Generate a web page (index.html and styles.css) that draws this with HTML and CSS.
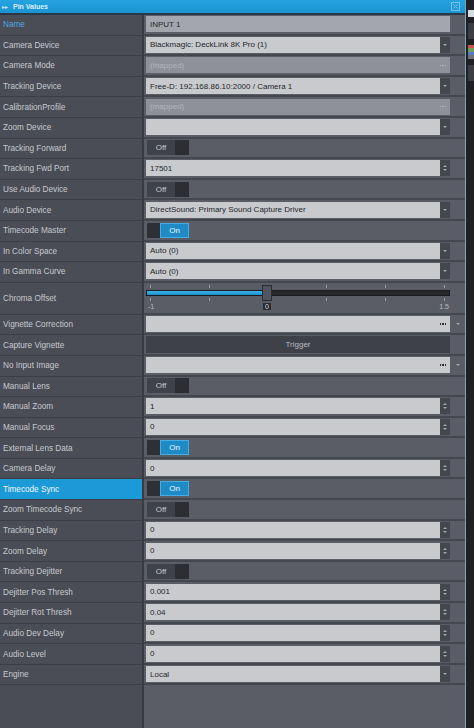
FILE: index.html
```html
<!DOCTYPE html>
<html lang="en">
<head>
    <meta charset="UTF-8">
    <title>Pin Values</title>
    <link rel="stylesheet" href="styles.css">
</head>
<body>
    <div class="screen">
        <div class="panel">
            <div class="titlebar">
                <span class="title-arrows">&#9656;&#9656;</span>
                <span class="title-text">Pin Values</span>
                <svg class="title-close" width="9" height="9" viewBox="0 0 9 9">
                    <rect x="0.5" y="0.5" width="8" height="8" fill="none" stroke="#7cc0e6" stroke-width="1"/>
                    <path d="M2.5 2.5 L6.5 6.5 M6.5 2.5 L2.5 6.5" stroke="#7cc0e6" stroke-width="1"/>
                </svg>
            </div>
            <div class="title-line"></div>

            <div class="rows">
                <div class="row">
                    <div class="label label-name">Name</div>
                    <div class="value"><div class="field field-name">INPUT 1</div></div>
                </div>
                <div class="row">
                    <div class="label">Camera Device</div>
                    <div class="value"><div class="field">Blackmagic: DeckLink 8K Pro (1)</div><div class="btn"><span class="tri-down"></span></div></div>
                </div>
                <div class="row">
                    <div class="label">Camera Mode</div>
                    <div class="value"><div class="field field-mapped">(mapped)<span class="dots"><i></i><i></i><i></i></span></div></div>
                </div>
                <div class="row">
                    <div class="label">Tracking Device</div>
                    <div class="value"><div class="field">Free-D: 192.168.86.10:2000 / Camera 1</div><div class="btn"><span class="tri-down"></span></div></div>
                </div>
                <div class="row">
                    <div class="label">CalibrationProfile</div>
                    <div class="value"><div class="field field-mapped">(mapped)<span class="dots"><i></i><i></i><i></i></span></div></div>
                </div>
                <div class="row">
                    <div class="label">Zoom Device</div>
                    <div class="value"><div class="field"></div><div class="btn"><span class="tri-down"></span></div></div>
                </div>
                <div class="row">
                    <div class="label">Tracking Forward</div>
                    <div class="value"><div class="toggle"><span class="t-text">Off</span><span class="t-knob"></span></div></div>
                </div>
                <div class="row">
                    <div class="label">Tracking Fwd Port</div>
                    <div class="value"><div class="field">17501</div><div class="btn spin"><span class="tri-up"></span><span class="tri-down"></span></div></div>
                </div>
                <div class="row">
                    <div class="label">Use Audio Device</div>
                    <div class="value"><div class="toggle"><span class="t-text">Off</span><span class="t-knob"></span></div></div>
                </div>
                <div class="row">
                    <div class="label">Audio Device</div>
                    <div class="value"><div class="field">DirectSound: Primary Sound Capture Driver</div><div class="btn"><span class="tri-down"></span></div></div>
                </div>
                <div class="row">
                    <div class="label">Timecode Master</div>
                    <div class="value"><div class="toggle on"><span class="t-knob"></span><span class="t-text">On</span></div></div>
                </div>
                <div class="row">
                    <div class="label">In Color Space</div>
                    <div class="value"><div class="field">Auto (0)</div><div class="btn"><span class="tri-down"></span></div></div>
                </div>
                <div class="row">
                    <div class="label">In Gamma Curve</div>
                    <div class="value"><div class="field">Auto (0)</div><div class="btn"><span class="tri-down"></span></div></div>
                </div>
                <div class="row row-tall">
                    <div class="label">Chroma Offset</div>
                    <div class="value">
                        <div class="slider">
                            <div class="ticks"><i></i><i></i><i></i><i></i><i></i><i></i></div>
                            <div class="track">
                                <div class="track-fill"></div>
                                <div class="handle"></div>
                            </div>
                            <div class="ticks"><i></i><i></i><i></i><i></i><i></i><i></i></div>
                            <div class="scale">
                                <span>-1</span>
                                <span class="scale-val">0</span>
                                <span>1.5</span>
                            </div>
                        </div>
                    </div>
                </div>
                <div class="row">
                    <div class="label">Vignette Correction</div>
                    <div class="value value-ext"><div class="field"><span class="dots dark"><i></i><i></i><i></i></span></div><div class="ext"><span class="tri-down"></span></div></div>
                </div>
                <div class="row">
                    <div class="label">Capture Vignette</div>
                    <div class="value"><div class="trigger">Trigger</div></div>
                </div>
                <div class="row">
                    <div class="label">No Input Image</div>
                    <div class="value value-ext"><div class="field"><span class="dots dark"><i></i><i></i><i></i></span></div><div class="ext"><span class="tri-down"></span></div></div>
                </div>
                <div class="row">
                    <div class="label">Manual Lens</div>
                    <div class="value"><div class="toggle"><span class="t-text">Off</span><span class="t-knob"></span></div></div>
                </div>
                <div class="row">
                    <div class="label">Manual Zoom</div>
                    <div class="value"><div class="field">1</div><div class="btn spin"><span class="tri-up"></span><span class="tri-down"></span></div></div>
                </div>
                <div class="row">
                    <div class="label">Manual Focus</div>
                    <div class="value"><div class="field">0</div><div class="btn spin"><span class="tri-up"></span><span class="tri-down"></span></div></div>
                </div>
                <div class="row">
                    <div class="label">External Lens Data</div>
                    <div class="value"><div class="toggle on"><span class="t-knob"></span><span class="t-text">On</span></div></div>
                </div>
                <div class="row">
                    <div class="label">Camera Delay</div>
                    <div class="value"><div class="field">0</div><div class="btn spin"><span class="tri-up"></span><span class="tri-down"></span></div></div>
                </div>
                <div class="row">
                    <div class="label label-active">Timecode Sync</div>
                    <div class="value"><div class="toggle on"><span class="t-knob"></span><span class="t-text">On</span></div></div>
                </div>
                <div class="row">
                    <div class="label">Zoom Timecode Sync</div>
                    <div class="value"><div class="toggle"><span class="t-text">Off</span><span class="t-knob"></span></div></div>
                </div>
                <div class="row">
                    <div class="label">Tracking Delay</div>
                    <div class="value"><div class="field">0</div><div class="btn spin"><span class="tri-up"></span><span class="tri-down"></span></div></div>
                </div>
                <div class="row">
                    <div class="label">Zoom Delay</div>
                    <div class="value"><div class="field">0</div><div class="btn spin"><span class="tri-up"></span><span class="tri-down"></span></div></div>
                </div>
                <div class="row">
                    <div class="label">Tracking Dejitter</div>
                    <div class="value"><div class="toggle"><span class="t-text">Off</span><span class="t-knob"></span></div></div>
                </div>
                <div class="row">
                    <div class="label">Dejitter Pos Thresh</div>
                    <div class="value"><div class="field">0.001</div><div class="btn spin"><span class="tri-up"></span><span class="tri-down"></span></div></div>
                </div>
                <div class="row">
                    <div class="label">Dejitter Rot Thresh</div>
                    <div class="value"><div class="field">0.04</div><div class="btn spin"><span class="tri-up"></span><span class="tri-down"></span></div></div>
                </div>
                <div class="row">
                    <div class="label">Audio Dev Delay</div>
                    <div class="value"><div class="field">0</div><div class="btn spin"><span class="tri-up"></span><span class="tri-down"></span></div></div>
                </div>
                <div class="row">
                    <div class="label">Audio Level</div>
                    <div class="value"><div class="field">0</div><div class="btn spin"><span class="tri-up"></span><span class="tri-down"></span></div></div>
                </div>
                <div class="row">
                    <div class="label">Engine</div>
                    <div class="value"><div class="field">Local</div><div class="btn"><span class="tri-down"></span></div></div>
                </div>
                <div class="row row-fill">
                    <div class="label"></div>
                    <div class="value"></div>
                </div>
            </div>
        </div>
        <div class="edge"></div>
        <div class="side">
            <div class="side-box light"></div>
            <div class="side-box"></div>
            <div class="side-box colors"></div>
            <div class="side-box"></div>
        </div>
    </div>
</body>
</html>
```

FILE: styles.css
```css
/* Pin Values panel */
html, body {
    margin: 0;
    padding: 0;
    background: #1f2125;
}

.screen {
    display: flex;
    width: 474px;
    height: 728px;
    overflow: hidden;
    font-family: "Liberation Sans", Arial, sans-serif;
    font-size: 8px;
}

.panel {
    width: 465px;
    flex: none;
    display: flex;
    flex-direction: column;
    background: #5a5d66;
}

.edge {
    width: 1px;
    background: #7ea4b7;
    flex: none;
}

.side {
    flex: 1;
    display: flex;
    flex-direction: column;
    gap: 6px;
    padding: 10px 0 0 2px;
    background: #1e2024;
}

.side-box {
    height: 16px;
    background: #3a3d44;
}

.side-box.light {
    height: 7px;
    background: #d8dadd;
}

.side-box.colors {
    height: 14px;
    background: linear-gradient(#c8554d 0 25%, #6aa05a 25% 50%, #4f7fc0 50% 75%, #6f7278 75%);
}

/* title */
.titlebar {
    height: 13px;
    display: flex;
    align-items: center;
    padding: 0 4px 0 2px;
    background: linear-gradient(#25a3df, #1a94d2);
    color: #dcefff;
}

.title-arrows {
    font-size: 6px;
    margin-right: 5px;
    color: #cfe8f8;
}

.title-text {
    font-weight: bold;
    font-size: 7px;
    flex: 1;
}

.title-close {
    margin-right: 1px;
}

.title-line {
    height: 2px;
    background: #2a3945;
}

/* rows */
.rows {
    flex: 1;
    display: flex;
    flex-direction: column;
}

.row {
    display: flex;
    height: 20.6px;
    flex: none;
}

.row-tall {
    height: 32px;
}

.row-fill {
    flex: 1;
}

.label {
    width: 144px;
    flex: none;
    box-sizing: border-box;
    display: flex;
    align-items: center;
    padding-left: 3px;
    background: #4a4d56;
    border-right: 2px solid #3a3c43;
    border-bottom: 1px solid #3c3e45;
    color: #c6c9ce;
    font-size: 8.2px;
    white-space: nowrap;
}

.label-name {
    color: #4fa9e0;
}

.label-active {
    background: #1b9ad7;
    color: #f2f8fc;
}

.row-fill .label,
.row-fill .value {
    border-bottom: none;
}

.value {
    flex: 1;
    box-sizing: border-box;
    display: flex;
    align-items: center;
    padding: 0 15px 0 2px;
    background: #5a5d66;
    border-bottom: 2px solid #45474e;
}

.value-ext {
    padding-right: 0;
}

.field {
    flex: 1;
    height: 16px;
    box-sizing: border-box;
    display: flex;
    align-items: center;
    padding-left: 4px;
    background: #c8cace;
    color: #24262a;
    white-space: nowrap;
    overflow: hidden;
}

.field-name {
    background: #a3a6ac;
}

.field-mapped {
    background: #8e9198;
    color: #b3b6bb;
}

.dots {
    display: flex;
    gap: 1px;
    margin-left: auto;
    margin-right: 4px;
}

.dots i {
    width: 1.5px;
    height: 1.5px;
    background: #b0b3b8;
}

.dots.dark i {
    background: #2b2d31;
}

.btn {
    width: 10px;
    height: 16px;
    flex: none;
    display: flex;
    flex-direction: column;
    align-items: center;
    justify-content: center;
    gap: 2px;
    background: #45474f;
}

.ext {
    width: 15px;
    height: 16px;
    flex: none;
    display: flex;
    align-items: center;
    justify-content: center;
}

.tri-down,
.tri-up {
    width: 0;
    height: 0;
    border-left: 2px solid transparent;
    border-right: 2px solid transparent;
}

.tri-down {
    border-top: 2px solid #a4a7ad;
}

.tri-up {
    border-bottom: 2px solid #a4a7ad;
}

/* toggles */
.toggle {
    display: flex;
    width: 42px;
    height: 15px;
    margin-left: 1px;
}

.t-text {
    width: 28px;
    display: flex;
    align-items: center;
    justify-content: center;
    background: #40424a;
    color: #c6c9ce;
}

.t-knob {
    flex: 1;
    background: #2c2e34;
}

.toggle.on .t-knob {
    flex: none;
    width: 13px;
    background: #2e3036;
}

.toggle.on .t-text {
    flex: 1;
    box-sizing: border-box;
    background: #1e8bc6;
    border: 1px solid #45ade3;
    color: #eef7fc;
}

/* trigger button */
.trigger {
    flex: 1;
    height: 17px;
    display: flex;
    align-items: center;
    justify-content: center;
    background: #3f4149;
    color: #b8bbc1;
}

/* slider */
.slider {
    flex: 1;
    display: flex;
    flex-direction: column;
    align-self: flex-start;
    padding-top: 2px;
}

.ticks {
    height: 3px;
    display: flex;
    justify-content: space-between;
    padding: 0 5px 0 4px;
}

.ticks i {
    width: 1px;
    background: #9a9da3;
}

.track {
    position: relative;
    height: 6px;
    margin: 2px 0;
    box-sizing: border-box;
    background: #26282c;
    border: 1px solid #1a1b1e;
}

.track-fill {
    width: 118px;
    height: 100%;
    background: linear-gradient(#3db5ee, #1a8fcb);
}

.handle {
    position: absolute;
    left: 115px;
    top: -6px;
    width: 10px;
    height: 16px;
    box-sizing: border-box;
    background: #52555d;
    border: 1px solid #2a2c30;
}

.scale {
    position: relative;
    display: flex;
    justify-content: space-between;
    padding: 2px 1px 0 2px;
    color: #b9bcc2;
    font-size: 7px;
}

.scale-val {
    position: absolute;
    left: 117px;
    top: 2px;
    padding: 0 2px;
    background: #2b2d32;
    color: #d2d5da;
}
```
